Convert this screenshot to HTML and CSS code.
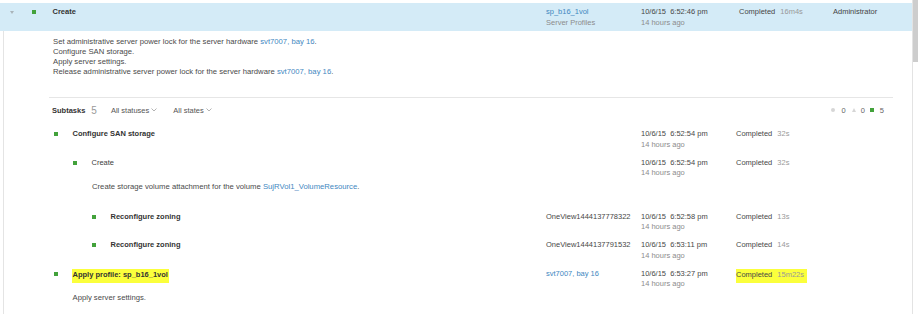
FILE: index.html
```html
<!DOCTYPE html>
<html>
<head>
<meta charset="utf-8">
<link rel="stylesheet" href="styles.css">
</head>
<body>
<div class="window">
  <div class="content">
    <div class="row task-head">
      <div class="name-cell head-name">
        <span class="toggle"></span>
        <span class="state"></span>
        <span class="title bold">Create</span>
      </div>
      <div class="cell"><a class="link">sp_b16_1vol</a><span class="sub">Server Profiles</span></div>
      <div class="cell"><span class="pre">10/6/15  6:52:46 pm</span><span class="sub">14 hours ago</span></div>
      <div class="cell status head-status"><span>Completed <span class="dur">16m4s</span></span></div>
      <div class="cell owner">Administrator</div>
    </div>

    <div class="details">
      <div class="summary">
        <p>Set administrative server power lock for the server hardware <a class="link">svt7007, bay 16</a>.</p>
        <p>Configure SAN storage.</p>
        <p>Apply server settings.</p>
        <p>Release administrative server power lock for the server hardware <a class="link">svt7007, bay 16</a>.</p>
      </div>
      <div class="sep"></div>

      <div class="subhead">
        <div class="subhead-left">
          <span class="sub-title">Subtasks</span>
          <span class="sub-count">5</span>
          <span class="filter">All statuses <svg class="chev" width="6" height="4" viewBox="0 0 6 4"><path d="M0.5 0.5 L3 3 L5.5 0.5" fill="none" stroke="#aaa" stroke-width="0.9"/></svg></span>
          <span class="filter">All states <svg class="chev" width="6" height="4" viewBox="0 0 6 4"><path d="M0.5 0.5 L3 3 L5.5 0.5" fill="none" stroke="#aaa" stroke-width="0.9"/></svg></span>
        </div>
        <div class="counts">
          <span class="dot"></span><span class="num">0</span>
          <span class="tri"></span><span class="num">0</span>
          <span class="sq"></span><span class="num">5</span>
        </div>
      </div>

      <div class="row sub-row lvl1">
        <div class="name-cell"><span class="state"></span><span class="bold">Configure SAN storage</span></div>
        <div class="cell"></div>
        <div class="cell"><span class="pre">10/6/15  6:52:54 pm</span><span class="sub">14 hours ago</span></div>
        <div class="cell status"><span>Completed <span class="dur">32s</span></span></div>
        <div class="cell"></div>
      </div>

      <div class="row sub-row lvl2">
        <div class="name-cell"><span class="state"></span><span class="plain">Create</span></div>
        <div class="cell"></div>
        <div class="cell"><span class="pre">10/6/15  6:52:54 pm</span><span class="sub">14 hours ago</span></div>
        <div class="cell status"><span>Completed <span class="dur">32s</span></span></div>
        <div class="cell"></div>
      </div>
      <p class="row-desc lvl2-desc">Create storage volume attachment for the volume <a class="link">SujRVol1_VolumeResource</a>.</p>

      <div class="row sub-row lvl3">
        <div class="name-cell"><span class="state"></span><span class="bold">Reconfigure zoning</span></div>
        <div class="cell">OneView1444137778322</div>
        <div class="cell"><span class="pre">10/6/15  6:52:58 pm</span><span class="sub">14 hours ago</span></div>
        <div class="cell status"><span>Completed <span class="dur">13s</span></span></div>
        <div class="cell"></div>
      </div>

      <div class="row sub-row lvl3">
        <div class="name-cell"><span class="state"></span><span class="bold">Reconfigure zoning</span></div>
        <div class="cell">OneView1444137791532</div>
        <div class="cell"><span class="pre">10/6/15  6:53:11 pm</span><span class="sub">14 hours ago</span></div>
        <div class="cell status"><span>Completed <span class="dur">14s</span></span></div>
        <div class="cell"></div>
      </div>

      <div class="row sub-row lvl1">
        <div class="name-cell"><span class="state"></span><span class="bold hl hl-name">Apply profile: sp_b16_1vol</span></div>
        <div class="cell"><a class="link">svt7007, bay 16</a></div>
        <div class="cell"><span class="pre">10/6/15  6:53:27 pm</span><span class="sub">14 hours ago</span></div>
        <div class="cell status"><span class="hl hl-status">Completed <span class="dur">15m22s</span></span></div>
        <div class="cell"></div>
      </div>
      <p class="row-desc lvl1-desc">Apply server settings.</p>
    </div>
  </div>
  <div class="scrollbar"><div class="thumb"></div></div>
</div>
</body>
</html>
```

FILE: styles.css
```css
* { box-sizing: border-box; }
html, body { margin: 0; padding: 0; background: #fff; }
body {
  font-family: "Liberation Sans", Arial, sans-serif;
  font-size: 7.5px;
  color: #474747;
  overflow: hidden;
}
p { margin: 0; }
a.link { color: #3f88bf; text-decoration: none; }

.window {
  display: flex;
  width: 919px;
  height: 314px;
  overflow: hidden;
}
.content {
  width: 912px;
  padding-top: 3px;
}
.scrollbar {
  width: 7px;
  border-left: 1px solid #e3e3e3;
}
.thumb {
  width: 5px;
  height: 62px;
  background: #cdcdcd;
}

.row {
  display: grid;
  grid-template-columns: var(--name, 542px) 95px 95px 94px 1fr;
  line-height: 10.5px;
}
.cell {
  display: flex;
  flex-direction: column;
  align-items: flex-start;
  white-space: nowrap;
}
.pre { white-space: pre; }
.sub { color: #8c8c8c; }
.dur { color: #999; margin-left: 3px; }
.bold { font-weight: bold; color: #333; }
.plain { color: #3d3d3d; }

/* top task */
.task-head {
  --name: 546px;
  background: #d4ebf7;
  padding: 4px 0 3px;
  height: 28px;
}
.name-cell {
  display: flex;
  align-items: flex-start;
  white-space: nowrap;
}
.head-name { padding-left: 10px; }
.toggle {
  width: 0; height: 0;
  margin-top: 4px;
  border-left: 2.5px solid transparent;
  border-right: 2.5px solid transparent;
  border-top: 3px solid #a9b4ba;
  margin-right: 18px;
}
.state {
  flex: none;
  width: 4px;
  height: 4px;
  margin-top: 3px;
  background: #43a23b;
  margin-right: 14.5px;
}
.head-name .state { margin-right: 16.5px; }
.head-status { padding-left: 3px; }
.owner { padding-left: 3px; color: #444; }

/* details */
.details {
  margin-left: 3px;
  border-left: 1px solid #e4e4e4;
  height: 300px;
}
.summary {
  padding: 6px 0 0 49px;
  line-height: 10px;
  font-size: 7.7px;
  color: #4a4a4a;
}
.sep {
  height: 1px;
  background: #e6e6e6;
  margin: 19.5px 19px 0 45px;
}
.subhead {
  display: flex;
  justify-content: space-between;
  align-items: center;
  height: 12px;
  margin-top: 6.5px;
  padding: 0 28px 0 48px;
}
.subhead-left { display: flex; align-items: center; }
.sub-title { font-weight: bold; color: #333; }
.sub-count { color: #999; font-size: 10px; margin-left: 6px; margin-right: 14px; }
.filter { color: #555; margin-right: 16px; display: inline-flex; align-items: center; }
.chev { margin-left: 2px; }
.counts { display: flex; align-items: center; color: #666; }
.dot { width: 4px; height: 4px; border-radius: 50%; background: #d6d6d6; margin-right: 6px; }
.tri {
  width: 0; height: 0;
  border-left: 2.5px solid transparent;
  border-right: 2.5px solid transparent;
  border-bottom: 4px solid #d6d6d6;
  margin: 0 5px 0 6px;
}
.sq { width: 4px; height: 4px; background: #43a23b; margin: 0 6px 0 5px; }

.sub-row {
  padding: 4px 0 3.5px;
}
.subhead + .sub-row { margin-top: 9.25px; }
.lvl1 .name-cell { padding-left: 50px; }
.lvl2 .name-cell { padding-left: 69px; }
.lvl3 .name-cell { padding-left: 88px; }

.row-desc { line-height: 10px; font-size: 7.7px; color: #4a4a4a; }
.lvl2-desc { padding-left: 88px; margin-bottom: 15.5px; }
.lvl1-desc { padding-left: 68.5px; }

.hl { background: #fbff3c; }
.hl-name { padding: 1.7px 1px; margin-left: -1px; }
.hl-status { padding: 1.7px 3px 1.7px 0; }
```
